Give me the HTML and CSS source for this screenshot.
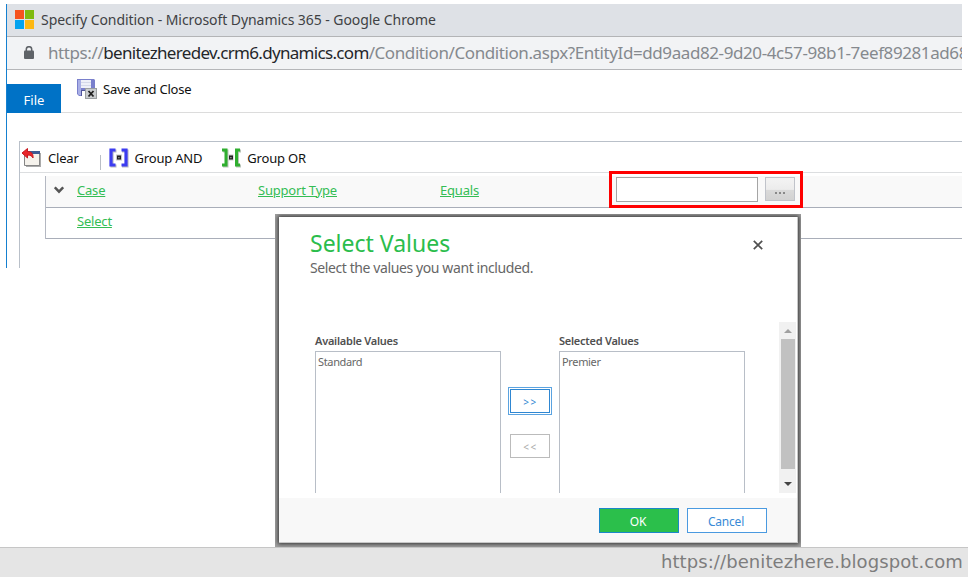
FILE: index.html
```html
<!DOCTYPE html>
<html lang="en">
<head>
<meta charset="utf-8">
<title>Specify Condition</title>
<link rel="stylesheet" href="styles.css">
</head>
<body>
<div class="page">
  <main class="window">
    <header class="titlebar">
      <svg class="ms-logo" width="19" height="19" viewBox="0 0 19 19"><path fill="#f6531e" d="M0 0h9v9H0z"/><path fill="#7fba10" d="M10 0h9v9h-9z"/><path fill="#04a3ef" d="M0 10h9v9H0z"/><path fill="#fdb813" d="M10 10h9v9h-9z"/></svg>
      <span class="title-text">Specify Condition - Microsoft Dynamics 365 - Google Chrome</span>
    </header>
    <div class="address">
      <svg class="lock" width="10" height="13" viewBox="0 0 10 13"><path fill="none" stroke="#5f6368" stroke-width="1.5" d="M2.3 6V3.400a2.700 2.700 0 0 1 5.400 0V6"/><rect y="4.600" width="10" height="8.400" rx="1" fill="#5f6368"/></svg>
      <span class="url">https://<b>benitezheredev.crm6.dynamics.com</b>/Condition/Condition.aspx?EntityId=dd9aad82-9d20-4c57-98b1-7eef89281ad68</span>
    </div>
    <div class="ribbon">
      <div class="file-tab"><span class="file-text">File</span></div>
      <div class="save">
        <svg width="20" height="20" viewBox="0 0 20 20"><path fill="#7a80cc" d="M0 0h17l1 1v16H2l-2-2z"/><path fill="#a9afe6" d="M1 1h3v15H2l-1-1z"/><path fill="#eef0f8" d="M4 1h10v8H4z"/><path fill="#d5d9ea" d="M4 3h10v1H4zM4 6h10v1H4z"/><path fill="#50549a" d="M4 11h9v6H4z"/><path fill="#fff" d="M5 12h3v5H5z"/><rect x="8.500" y="9.500" width="11" height="10" fill="#c9ccce" stroke="#9a9ea0"/><path stroke="#202020" stroke-width="1.800" d="M11.500 12l5 5.500M16.500 12l-5 5.500"/></svg>
        <span class="save-text">Save and Close</span>
      </div>
    </div>
    <section class="editor">
      <div class="toolbar">
        <span class="tool clear"><svg width="20" height="20" viewBox="0 0 20 20"><path fill="#aaa" d="M4 5h15v14H4z"/><path fill="#f5f2ec" d="M3 4h15v13H3z"/><path fill="none" stroke="#858585" d="M2.500 4.500h15v13h-15z"/><path fill="#3c5c94" d="M4 3h14v3H4z"/><path fill="#e8262a" stroke="#c81a20" stroke-width="1" d="M0 5l5.500-4.500v3c4 0 6 2.500 5.500 6.500-1-2-2.500-3-5.500-3v3z"/></svg><span class="clear-text">Clear</span></span>
        <i class="sep"></i>
        <span class="tool and"><svg width="20" height="20" viewBox="0 0 20 20"><g fill="none" stroke-width="3.200"><path stroke="#b9b9c4" d="M7.500 3H3v15h4.500M13 3h5v15h-5"/><path stroke="#3c3cf0" d="M6.500 2H2v15h4.500M12.500 2H17v15h-4.500"/></g><path fill="#c8c8c8" d="M7 6.500h6v6H7z"/><path fill="#222" d="M8 7.500h4v4H8z"/><path fill="#aaa" d="M9.300 9h1.200v1.200H9.300z"/></svg><span class="and-text">Group AND</span></span>
        <span class="tool or"><svg width="20" height="20" viewBox="0 0 20 20"><g fill="none" stroke-width="3"><path stroke="#b9c4b9" d="M2 3h4v15H2M20 3h-3.500v15h3.500"/><path stroke="#2fae2f" d="M1 2h4v15H1M19 2h-3.500v15h3.500"/></g><path fill="#c8c8c8" d="M7.500 6.500h5v6h-5z"/><path fill="#222" d="M8 7.500h4v4H8z"/><path fill="#aaa" d="M9.300 9h1.200v1.200H9.300z"/></svg><span class="or-text">Group OR</span></span>
      </div>
      <div class="rows">
        <div class="row first">
          <svg class="chev" width="10" height="8" viewBox="0 0 10 8"><path fill="none" stroke="#555" stroke-width="2.500" d="M.8 1.300L5 5.700l4.200-4.400"/></svg>
          <a>Case</a><a>Support Type</a><a>Equals</a>
          <div class="highlight"><div class="input"></div><div class="more"><i></i><i></i><i></i></div></div>
        </div>
        <div class="row second"><a>Select</a></div>
      </div>
    </section>
  </main>
  <footer class="foot"><span>https://benitezhere.blogspot.com</span></footer>
  <div class="dialog">
    <div class="dialog-body">
      <div class="head">
        <div><h1>Select Values</h1><p>Select the values you want included.</p></div>
        <svg class="close" width="10" height="10" viewBox="0 0 10 10"><path stroke="#505050" stroke-width="1.700" d="M.8.8l8.400 8.400M9.200.8L.8 9.200"/></svg>
      </div>
      <div class="content">
        <div class="col"><span class="label">Available Values</span><div class="list"><span>Standard</span></div></div>
        <div class="moves"><div class="move on"><span>&gt;&gt;</span></div><div class="move off"><span>&lt;&lt;</span></div></div>
        <div class="col"><span class="label">Selected Values</span><div class="list"><span>Premier</span></div></div>
        <div class="scroll"><svg width="8" height="4" viewBox="0 0 8 4"><path fill="#a0a0a0" d="M0 4L4 0l4 4z"/></svg><div class="thumb"></div><svg width="8" height="4" viewBox="0 0 8 4"><path fill="#444" d="M0 0h8L4 4z"/></svg></div>
      </div>
      <div class="actions"><div class="btn ok"><span>OK</span></div><div class="btn"><span>Cancel</span></div></div>
    </div>
  </div>
</div>
</body>
</html>
```
FILE: styles.css
```css
* { box-sizing: border-box; }
body { margin: 0; background: #fff; font-family: "Noto Sans", "Open Sans", sans-serif; color: #222; }
.page { position: relative; width: 968px; height: 577px; overflow: hidden; padding-top: 4px; display: flex; flex-direction: column; }
span, a, p { white-space: nowrap; }
svg { flex: none; display: block; }
.window { width: 956px; height: 264px; margin-left: 6px; border-left: 1px solid #1580d0; overflow: hidden; }
.titlebar { height: 33px; background: #dee1e6; border-bottom: 1px solid #b3b4b6; display: flex; align-items: center; padding: 0 0 2px 8px; gap: 7px; }
.title-text { font-size: 14px; letter-spacing: -.06px; color: #3f4144; }
.address { height: 33px; background: #f2f3f5; border-bottom: 1px solid #b5b6b9; display: flex; align-items: center; padding: 0 0 1px 17px; gap: 14px; }
.url { font-size: 17px; letter-spacing: -.41px; color: #85898e; }
.url b { font-weight: 400; color: #24262a; letter-spacing: -.68px; }
.ribbon { height: 43px; border-bottom: 1px solid #dcdcdc; display: flex; }
.file-tab { width: 54px; height: 29px; margin-top: 14px; background: #0072c6; color: #fff; display: flex; align-items: center; justify-content: center; font-size: 13px; padding-top: 2px; }
.save { display: flex; gap: 6px; margin: 9px 0 0 16px; height: 20px; align-items: center; font-size: 13px; color: #111; letter-spacing: -.22px; }
.editor { margin: 28px 0 0 12px; border: solid #b9c0c9; border-width: 1px 0 0 1px; height: 127px; }
.toolbar { height: 31px; display: flex; border-bottom: 1px solid #dcdee0; align-items: center; padding: 1px 0 0 2px; font-size: 13px; color: #111; letter-spacing: -.2px; }
.tool { display: flex; align-items: center; gap: 6px; }
.sep { width: 1px; height: 15px; background: #b9bec6; margin: 9px 8px 0 21px; }
.or { margin-left: 19px; }
.rows { margin: 3px 0 0 25px; border-left: 1px solid #b4b8c2; }
.row { position: relative; display: flex; align-items: center; border-bottom: 1px solid #a9aeb9; font-size: 13px; letter-spacing: -.2px; }
.row a { color: #34bd55; text-decoration: underline; padding-bottom: 4px; }
.first { height: 32px; background: #f9f9f9; display: grid; grid-template-columns: 31px 181px 182px 1fr; }
.chev { margin: 0 0 3px 8px; }
.second { height: 31px; padding-left: 31px; }
.highlight { position: absolute; left: 563px; top: -5px; width: 194px; height: 37px; border: 3px solid #f00; display: flex; padding: 3px 4px; gap: 7px; }
.input { width: 142px; height: 25px; border: 1px solid #a5a5a5; background: #fff; }
.more { width: 30px; height: 24px; border: 1px solid #c0c3ca; background: linear-gradient(#f3f3f3, #ececec 52%, #dadada 54%, #d2d2d2); display: flex; gap: 2px; justify-content: center; padding-top: 14px; }
.more i { width: 2px; height: 2px; background: #888; }
.foot { margin-top: auto; height: 30px; flex: none; background: #e5e5e5; border-top: 1px solid #c6c6c6; display: flex; justify-content: flex-end; align-items: center; padding: 0 5px 2px 0; font: 18px "DejaVu Sans", sans-serif; letter-spacing: .09px; color: #7d7d7d; }
.dialog { position: absolute; left: 275px; top: 214px; width: 526px; height: 333px; padding: 3px 3px 4px 4px; background: #a0a0a0; overflow: hidden; }
.dialog-body { height: 326px; background: #fff; display: flex; flex-direction: column; border: solid #c8c8c8; border-width: 0 1px 1px 0; box-shadow: 0 0 4px 1px #333; }
.head { height: 105px; display: flex; justify-content: space-between; padding: 10px 34px 0 31px; }
.close { margin-top: 13px; }
h1 { margin: 0; font-size: 23px; line-height: 32px; font-weight: 400; color: #2bbd4c; }
p { margin: 0; font-size: 14px; line-height: 17px; letter-spacing: -.4px; color: #666; }
.content { height: 171px; display: flex; padding-left: 36px; }
.label { display: block; font-size: 11px; line-height: 15px; font-weight: 600; letter-spacing: -.25px; color: #505050; padding-top: 11px; height: 29px; }
.list { width: 186px; height: 142px; border: 1px solid #b8bec7; border-bottom: 0; font-size: 11px; line-height: 15px; letter-spacing: -.35px; padding: 2px 0 0 2px; color: #666; }
.moves { width: 58px; padding: 65px 0 0 7px; display: flex; flex-direction: column; gap: 21px; font-size: 10px; letter-spacing: 1.500px; }
.move { border: 1px solid #bbb; display: flex; align-items: center; justify-content: center; width: 40px; height: 24px; color: #aaa; margin-left: 2px; padding: 2px 0 0 1px; }
.on { border-color: #2f87d2; outline: 1px solid #5ba3e0; outline-offset: 1px; margin: 2px 0 0 2px; color: #2f87d2; }
.scroll { width: 17px; margin-left: 34px; background: #f1f1f1; height: 171px; display: flex; flex-direction: column; align-items: center; padding: 7px 0; }
.thumb { width: 14px; height: 130px; background: #c1c1c1; margin: 6px 0 13px; }
.actions { flex: 1; margin-top: 5px; background: #f8f8f8; display: flex; gap: 8px; justify-content: flex-end; padding: 10px 30px 0 0; font-size: 12px; letter-spacing: -.2px; }
.btn { width: 80px; height: 25px; border: 1px solid #4a9ae0; display: flex; align-items: center; justify-content: center; background: #fff; color: #398ad6; padding: 1px 2px 0 0; }
.ok { background: #2bbf4b; color: #fff; border-color: #1b87c9; }
```
